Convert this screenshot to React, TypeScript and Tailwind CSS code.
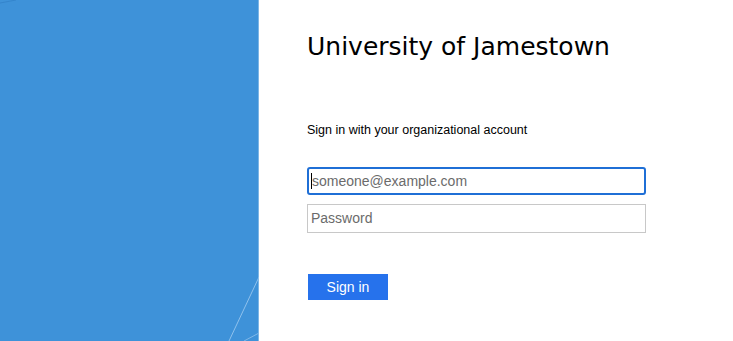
import React from "react";

export default function App() {
  return (
    <div className="flex h-[341px] w-[733px] overflow-hidden bg-white" style={{ fontFamily: '"DejaVu Sans", Verdana, sans-serif' }}>
      <div className="relative h-full w-[259px] shrink-0 bg-[#3e92d9] border-r border-[#7db6e6]">
        <svg className="absolute inset-0" width="259" height="341" viewBox="0 0 259 341">
          <line x1="259" y1="277" x2="229" y2="341" stroke="#8fc1ec" strokeWidth="1" />
          <line x1="259" y1="333" x2="244" y2="341" stroke="#7fb7e8" strokeWidth="1" />
          <line x1="0" y1="3" x2="16" y2="0" stroke="#3585cc" strokeWidth="1" />
        </svg>
      </div>
      <div className="flex flex-col pl-[48px] pt-[32px]">
        <h1 className="text-[25px] leading-[30px] text-black">University of Jamestown</h1>
        <p className="mt-[60px] font-['Liberation_Sans',Arial,sans-serif] text-[12.5px] leading-[16px] text-black">Sign in with your organizational account</p>
        <div className="mt-[29px] flex h-[28px] w-[339px] items-center rounded-[3px] border-2 border-[#1f6fd6] pl-[2px]">
          <span className="h-[16px] w-px bg-black" />
          <span className="font-['Liberation_Sans',Arial,sans-serif] text-[14px] text-[#6b6b6b]">someone@example.com</span>
        </div>
        <div className="mt-[9px] flex h-[29px] w-[339px] items-center border border-[#c8c8c8] pl-[3px]">
          <span className="font-['Liberation_Sans',Arial,sans-serif] text-[14px] text-[#6b6b6b]">Password</span>
        </div>
        <button className="mt-[41px] ml-px flex h-[26px] w-[80px] items-center justify-center bg-[#2672ec] font-['Liberation_Sans',Arial,sans-serif] text-[14px] text-white">Sign in</button>
      </div>
    </div>
  );
}
